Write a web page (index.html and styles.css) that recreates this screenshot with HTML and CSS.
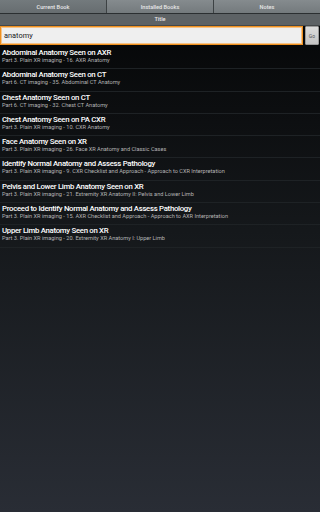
FILE: index.html
```html
<!DOCTYPE html>
<html lang="en">
<head>
    <meta charset="UTF-8">
    <meta name="viewport" content="width=device-width, initial-scale=1.0">
    <title>Search</title>
    <link rel="stylesheet" href="styles.css">
</head>
<body>
    <div class="tabs">
        <div class="tab active">Current Book</div>
        <div class="tab">Installed Books</div>
        <div class="tab">Notes</div>
    </div>
    <div class="titlebar">Title</div>

    <div class="search">
        <div class="search-input">anatomy</div>
        <button class="go">Go</button>
    </div>

    <ul class="results">
        <li>
            <div class="item-title">Abdominal Anatomy Seen on AXR</div>
            <div class="item-sub">Part 3. Plain XR imaging - 16. AXR Anatomy</div>
        </li>
        <li>
            <div class="item-title">Abdominal Anatomy Seen on CT</div>
            <div class="item-sub">Part 6. CT imaging - 35. Abdominal CT Anatomy</div>
        </li>
        <li>
            <div class="item-title">Chest Anatomy Seen on CT</div>
            <div class="item-sub">Part 6. CT imaging - 32. Chest CT Anatomy</div>
        </li>
        <li>
            <div class="item-title">Chest Anatomy Seen on PA CXR</div>
            <div class="item-sub">Part 3. Plain XR imaging - 10. CXR Anatomy</div>
        </li>
        <li>
            <div class="item-title">Face Anatomy Seen on XR</div>
            <div class="item-sub">Part 3. Plain XR imaging - 26. Face XR Anatomy and Classic Cases</div>
        </li>
        <li>
            <div class="item-title">Identify Normal Anatomy and Assess Pathology</div>
            <div class="item-sub">Part 3. Plain XR imaging - 9. CXR Checklist and Approach - Approach to CXR Interpretation</div>
        </li>
        <li>
            <div class="item-title">Pelvis and Lower Limb Anatomy Seen on XR</div>
            <div class="item-sub">Part 3. Plain XR imaging - 21. Extremity XR Anatomy II: Pelvis and Lower Limb</div>
        </li>
        <li>
            <div class="item-title">Proceed to Identify Normal Anatomy and Assess Pathology</div>
            <div class="item-sub">Part 3. Plain XR imaging - 15. AXR Checklist and Approach - Approach to AXR Interpretation</div>
        </li>
        <li>
            <div class="item-title">Upper Limb Anatomy Seen on XR</div>
            <div class="item-sub">Part 3. Plain XR imaging - 20. Extremity XR Anatomy I: Upper Limb</div>
        </li>
    </ul>
</body>
</html>
```

FILE: styles.css
```css
html, body {
    height: 100%;
}
body {
    margin: 0;
    font-family: Roboto, "Noto Sans", sans-serif;
    background: linear-gradient(#040506, #15181b 45%, #292d35);
    color: #fff;
}
.tabs {
    display: flex;
    height: 13px;
    background: linear-gradient(#858b8e, #747a7d);
    border-bottom: 1px solid #2b2f31;
}
.tab {
    flex: 1;
    display: flex;
    align-items: center;
    justify-content: center;
    font-size: 5.6px;
    font-weight: 500;
    color: #e8e8e8;
    border-left: 1px solid #3d4244;
}
.tab:first-child {
    border-left: none;
}
.tab.active {
    background: linear-gradient(#737a7d, #676d70);
}
.titlebar {
    height: 11px;
    line-height: 11px;
    text-align: center;
    font-size: 5.6px;
    font-weight: 500;
    color: #e8e8e8;
    background: #5d6265;
    border-bottom: 1px solid #44484a;
}
.search {
    display: flex;
    gap: 2px;
    height: 19px;
}
.search-input {
    flex: 1;
    box-sizing: border-box;
    height: 19px;
    padding: 0 3px;
    line-height: 17px;
    font-size: 7.4px;
    color: #1a1a1a;
    background: #efefef;
    border: 1px solid #f0901e;
    box-shadow: inset 0 0 0 1px #f6c48a;
}
.go {
    width: 14px;
    height: 19px;
    margin-right: 1px;
    padding: 0;
    font-family: Roboto, sans-serif;
    font-size: 5px;
    color: #555;
    background: linear-gradient(#dcdcdc, #c4c4c4);
    border: 1px solid #9a9a9a;
    border-radius: 1px;
}
.results {
    list-style: none;
    margin: 2px 0 0;
    padding: 0;
}
.results li {
    height: 21.3px;
    padding: 0 2px;
    border-bottom: 1px solid #1e2225;
    overflow: hidden;
}
.item-title {
    padding-top: 1px;
    line-height: 9px;
    font-size: 7.8px;
    font-weight: 500;
    letter-spacing: -0.3px;
    white-space: nowrap;
}
.item-sub {
    line-height: 7px;
    font-size: 5.6px;
    color: #b4b4b4;
    white-space: nowrap;
}
```
